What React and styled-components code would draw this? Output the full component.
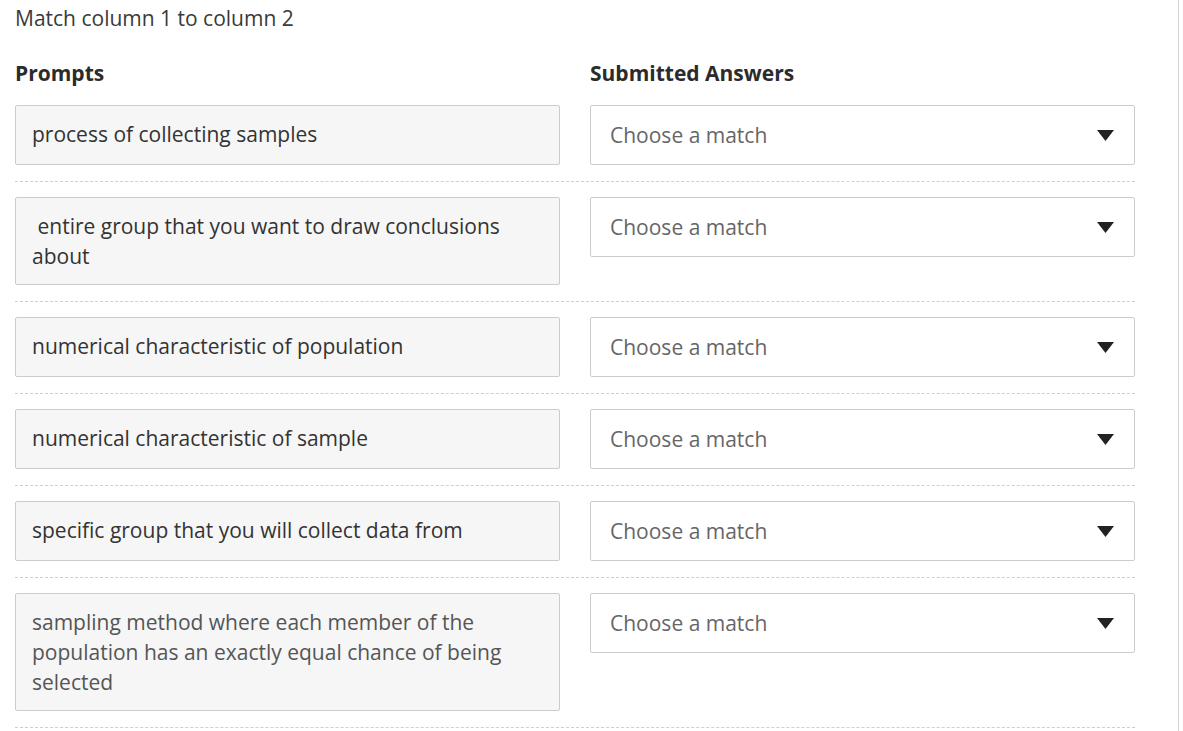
import React from 'react';
import styled, { createGlobalStyle } from 'styled-components';

const GlobalStyle = createGlobalStyle`
  html, body {
    margin: 0;
    padding: 0;
    background: #fff;
  }
  body {
    font-family: "Open Sans", "Noto Sans", sans-serif;
    color: #333;
  }
`;

const Page = styled.div`
  width: 1179px;
  min-height: 731px;
  padding: 4px 0 0 15px;
  border-right: 1px solid #d4d4d4;
  box-sizing: border-box;
`;

const Title = styled.div`
  font-size: 21px;
  line-height: 28px;
  color: #3a3a3a;
`;

const Columns = styled.div`
  width: 1120px;
`;

const HeaderRow = styled.div`
  display: grid;
  grid-template-columns: 545px 545px;
  column-gap: 30px;
  margin-top: 27px;
  margin-bottom: 3px;
`;

const Heading = styled.div`
  font-size: 21px;
  line-height: 28px;
  font-weight: 700;
  color: #2b2b2b;
`;

const Row = styled.div`
  display: grid;
  grid-template-columns: 545px 545px;
  column-gap: 30px;
  align-items: start;
  padding: 15px 0 16px;
  border-bottom: 1px dashed #cfcfcf;
`;

const Prompt = styled.div`
  background: #f6f6f6;
  border: 1px solid #cccccc;
  border-radius: 2px;
  padding: 13px 16px;
  font-size: 21px;
  line-height: 30px;
  color: ${p => p.$muted ? '#555' : '#333'};
  white-space: pre-wrap;
  box-sizing: border-box;
  min-height: 60px;
`;

const Select = styled.div`
  display: flex;
  align-items: center;
  justify-content: space-between;
  height: 60px;
  box-sizing: border-box;
  background: #fff;
  border: 1px solid #cccccc;
  border-radius: 2px;
  padding: 0 20px 0 19px;
  font-size: 21px;
  color: #666;
  cursor: pointer;
`;

const Arrow = () => (
  <svg width="17" height="11" viewBox="0 0 17 11">
    <polygon points="0,0 17,0 8.5,11" fill="#222" />
  </svg>
);

const prompts = [
  { text: 'process of collecting samples' },
  { text: ' entire group that you want to draw conclusions about' },
  { text: 'numerical characteristic of population' },
  { text: 'numerical characteristic of sample' },
  { text: 'specific group that you will collect data from' },
  { text: 'sampling method where each member of the population has an exactly equal chance of being selected', muted: true },
];

export default function App() {
  return (
    <Page>
      <GlobalStyle />
      <Title>Match column 1 to column 2</Title>
      <Columns>
        <HeaderRow>
          <Heading>Prompts</Heading>
          <Heading>Submitted Answers</Heading>
        </HeaderRow>
        {prompts.map((p, i) => (
          <Row key={i}>
            <Prompt $muted={p.muted}>{p.text}</Prompt>
            <Select>
              <span>Choose a match</span>
              <Arrow />
            </Select>
          </Row>
        ))}
      </Columns>
    </Page>
  );
}
